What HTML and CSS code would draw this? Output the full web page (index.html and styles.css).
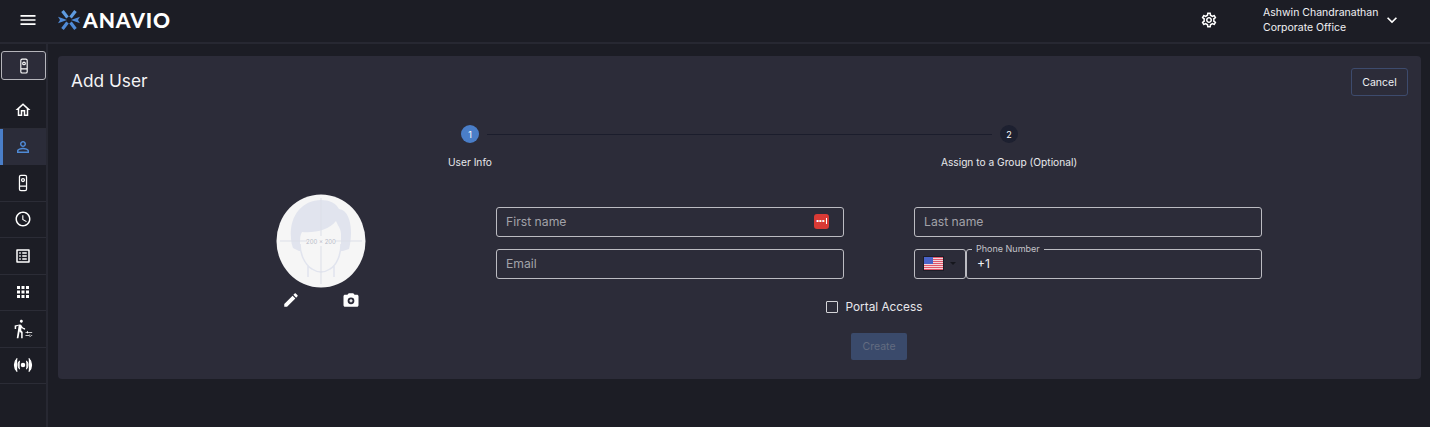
FILE: index.html
```html
<!DOCTYPE html>
<html lang="en">
<head>
<meta charset="utf-8">
<title>Add User</title>
<link rel="stylesheet" href="styles.css">
</head>
<body>
<div class="app">
  <header class="topbar">
    <button class="menu-btn" aria-label="menu"><svg class="ico-20" viewBox="0 0 24 24"><path d="M3 18h18v-2H3v2zm0-5h18v-2H3v2zm0-7v2h18V6H3z"/></svg></button>
    <div class="logo">
      <svg class="logo-mark" viewBox="0 0 22 20">
        <g fill="none" stroke-width="3.200" stroke="#4f8ad6">
          <path d="M4.500 1 L9.500 7.500 M17.500 1 L12.500 7.500" stroke="#5f9be0"/>
          <path d="M4.500 19 L9.500 12.500 M17.500 19 L12.500 12.500"/>
        </g>
        <path d="M0 6.800 L9 10 L0 13.200 L2 10 Z M22 6.800 L13 10 L22 13.200 L20 10 Z" fill="#4f8ad6"/>
      </svg>
      <span class="logo-text">ANAVIO</span>
    </div>
    <div class="spacer"></div>
    <button class="gear-btn" aria-label="settings"><svg class="ico-18" viewBox="0 0 24 24"><path d="M19.43 12.98c.04-.32.07-.64.07-.98 0-.34-.03-.66-.07-.98l2.11-1.65c.19-.15.24-.42.12-.64l-2-3.46c-.09-.16-.26-.25-.44-.25-.06 0-.12.01-.17.03l-2.49 1c-.52-.4-1.08-.73-1.69-.98l-.38-2.65C14.46 2.18 14.25 2 14 2h-4c-.25 0-.46.18-.49.42l-.38 2.65c-.61.25-1.17.59-1.69.98l-2.49-1c-.06-.02-.12-.03-.18-.03-.17 0-.34.09-.43.25l-2 3.46c-.13.22-.07.49.12.64l2.11 1.65c-.04.32-.07.65-.07.98 0 .33.03.66.07.98l-2.11 1.65c-.19.15-.24.42-.12.64l2 3.46c.09.16.26.25.44.25.06 0 .12-.01.17-.03l2.49-1c.52.4 1.08.73 1.69.98l.38 2.65c.03.24.24.42.49.42h4c.25 0 .46-.18.49-.42l.38-2.65c.61-.25 1.17-.59 1.69-.98l2.49 1c.06.02.12.03.18.03.17 0 .34-.09.43-.25l2-3.46c.12-.22.07-.49-.12-.64l-2.11-1.65zm-1.98-1.71c.04.31.05.52.05.73 0 .21-.02.43-.05.73l-.14 1.13.89.7 1.08.84-.7 1.21-1.27-.51-1.04-.42-.9.68c-.43.32-.84.56-1.25.73l-1.06.43-.16 1.13-.2 1.35h-1.4l-.19-1.35-.16-1.13-1.06-.43c-.43-.18-.83-.41-1.23-.71l-.91-.7-1.06.43-1.27.51-.7-1.21 1.08-.84.89-.7-.14-1.13c-.03-.31-.05-.54-.05-.74s.02-.43.05-.73l.14-1.13-.89-.7-1.08-.84.7-1.21 1.27.51 1.04.42.9-.68c.43-.32.84-.56 1.25-.73l1.06-.43.16-1.13.2-1.35h1.39l.19 1.35.16 1.13 1.06.43c.43.18.83.41 1.23.71l.91.7 1.06-.43 1.27-.51.7 1.21-1.07.85-.89.7.14 1.13zM12 8c-2.21 0-4 1.79-4 4s1.79 4 4 4 4-1.79 4-4-1.79-4-4-4zm0 6c-1.1 0-2-.9-2-2s.9-2 2-2 2 .9 2 2-.9 2-2 2z"/></svg></button>
    <div class="account">
      <div class="account-text"><div>Ashwin Chandranathan</div><div>Corporate Office</div></div>
      <svg class="ico-20" viewBox="0 0 24 24"><path d="M16.59 8.59L12 13.17 7.41 8.59 6 10l6 6 6-6z"/></svg>
    </div>
  </header>
  <div class="layout">
    <nav class="sidebar">
      <button class="device-btn" aria-label="device">
        <svg class="ico-18" viewBox="0 0 24 24"><path fill-rule="evenodd" d="M9.500 2h5A2.500 2.500 0 0 1 17 4.500v15a2.500 2.500 0 0 1-2.500 2.500h-5A2.500 2.500 0 0 1 7 19.500v-15A2.500 2.500 0 0 1 9.500 2zm0 1.500a1 1 0 0 0-1 1V15h7V4.500a1 1 0 0 0-1-1h-5zm-1 13v3a1 1 0 0 0 1 1h5a1 1 0 0 0 1-1v-3h-7zM12 6a2.500 2.500 0 1 1 0 5 2.500 2.500 0 0 1 0-5zm0 1.500a1 1 0 1 0 0 2 1 1 0 0 0 0-2z"/></svg>
      </button>
      <ul class="nav-list">
        <li class="nav-item"><svg class="ico-18" viewBox="0 0 24 24"><path d="M12 5.69l5 4.5V18h-2v-6H9v6H7v-7.81l5-4.5M12 3L2 12h3v8h6v-6h2v6h6v-8h3L12 3z"/></svg></li>
        <li class="nav-item active"><svg class="ico-18" viewBox="0 0 24 24"><path d="M12 5.9c1.16 0 2.1.94 2.1 2.1s-.94 2.1-2.1 2.1S9.9 9.16 9.9 8s.94-2.1 2.1-2.1m0 9c2.97 0 6.1 1.46 6.1 2.1v1.1H5.9V17c0-.64 3.13-2.1 6.1-2.1M12 4C9.79 4 8 5.79 8 8s1.79 4 4 4 4-1.79 4-4-1.79-4-4-4zm0 9c-2.67 0-8 1.34-8 4v3h16v-3c0-2.66-5.33-4-8-4z"/></svg></li>
        <li class="nav-item"><svg class="ico-20" viewBox="0 0 24 24"><path fill-rule="evenodd" d="M9.500 2h5A2.500 2.500 0 0 1 17 4.500v15a2.500 2.500 0 0 1-2.500 2.500h-5A2.500 2.500 0 0 1 7 19.500v-15A2.500 2.500 0 0 1 9.500 2zm0 1.500a1 1 0 0 0-1 1V15h7V4.500a1 1 0 0 0-1-1h-5zm-1 13v3a1 1 0 0 0 1 1h5a1 1 0 0 0 1-1v-3h-7zM12 6a2.500 2.500 0 1 1 0 5 2.500 2.500 0 0 1 0-5zm0 1.500a1 1 0 1 0 0 2 1 1 0 0 0 0-2z"/></svg></li>
        <li class="nav-item"><svg class="ico-18" viewBox="0 0 24 24"><path d="M11.99 2C6.47 2 2 6.48 2 12s4.47 10 9.99 10C17.52 22 22 17.52 22 12S17.52 2 11.99 2zM12 20c-4.42 0-8-3.58-8-8s3.58-8 8-8 8 3.58 8 8-3.58 8-8 8zm.5-13H11v6l5.25 3.15.75-1.23-4.5-2.67z"/></svg></li>
        <li class="nav-item"><svg class="ico-18" viewBox="0 0 24 24"><path d="M19 5v14H5V5h14m1.100-2H3.900c-.5 0-.9.4-.9.9v16.200c0 .4.4.9.9.9h16.200c.4 0 .9-.5.9-.9V3.900c0-.5-.5-.9-.9-.9zM11 7h6v2h-6V7zm0 4h6v2h-6v-2zm0 4h6v2h-6zM7 7h2v2H7zm0 4h2v2H7zm0 4h2v2H7z"/></svg></li>
        <li class="nav-item"><svg class="ico-18" viewBox="0 0 24 24"><path d="M4 8h4V4H4v4zm6 12h4v-4h-4v4zm-6 0h4v-4H4v4zm0-6h4v-4H4v4zm6 0h4v-4h-4v4zm6-10v4h4V4h-4zm-6 4h4V4h-4v4zm6 6h4v-4h-4v4zm0 6h4v-4h-4v4z"/></svg></li>
        <li class="nav-item"><svg class="ico-20" viewBox="0 0 24 24"><path d="M10 4.500c1 0 1.800-.8 1.800-1.800S11 1 10 1s-1.800.8-1.800 1.700S9 4.500 10 4.500zM6.800 7.700 4.500 23h2l1.500-8 1.800 2v6h1.800v-7.500l-1.800-2 .5-3c1 1.300 2.600 2.200 4.200 2.300v-1.800c-1.500 0-2.800-.9-3.500-2.100l-.9-1.500c-.3-.5-.9-.9-1.500-.9-.3 0-.5.1-.7.1L2 7.700V12h1.800V9l3-1.300z"/><path d="M15 15.500h8v1h-8zM18 14v3.800l-2-1.800zM15 19.500h8v1h-8zM20 18v3.800l2-1.800z"/></svg></li>
        <li class="nav-item"><svg class="ico-20" viewBox="0 0 24 24" fill="none" stroke="#fff" stroke-width="1.400"><circle cx="12" cy="12" r="2"/><path d="M8 7a7.500 7.500 0 0 0 0 10M16 7a7.500 7.500 0 0 1 0 10M5 4a11.500 11.500 0 0 0 0 16M19 4a11.500 11.500 0 0 1 0 16"/></svg></li>
      </ul>
    </nav>
    <main class="content">
      <section class="card">
        <div class="card-head">
          <h1 class="title">Add User</h1>
          <button class="cancel">Cancel</button>
        </div>
        <div class="stepper">
          <div class="step"><span class="dot dot-on">1</span><span class="step-label">User Info</span></div>
          <div class="step-line"></div>
          <div class="step"><span class="dot">2</span><span class="step-label">Assign to a Group (Optional)</span></div>
        </div>
        <div class="form-row">
          <div class="avatar-col">
            <svg class="avatar" viewBox="0 0 90 94">
              <ellipse cx="45" cy="47" rx="44.500" ry="46.500" fill="#f6f6f6"/>
              <path d="M15 44C13 20 28 6 45 6c8 0 15 3 18 9 8 1 12 11 12 24 0 6-1 12-2 16l-6 2H23l-6-3c-1-3-2-6-2-10z" fill="#e1e4ee"/>
              <path d="M24 50c0-5 0-9 2-12 14 1 27-2 34-11 2 5 5 8 5 13v10c0 14-9 27-20 28-12 0-21-13-21-28z" fill="#f6f6f6"/>
              <path d="M24 50c0 10 5 21 12 25 3 2 6 3 9 3s6-1 9-3c7-4 11-15 11-25M32 71v12M58 71v12" fill="none" stroke="#e1e4ee" stroke-width="1.500"/>
              <path d="M45 4v86M4 47h82" stroke="#dcdfe8" stroke-width="1"/>
              <rect x="31" y="42" width="28" height="10" fill="#f6f6f6"/>
              <text x="45" y="49.500" class="avatar-size" text-anchor="middle">200 x 200</text>
            </svg>
            <div class="avatar-actions">
              <svg class="ico-18" viewBox="0 0 24 24"><path d="M3 17.250V21h3.750L17.810 9.940l-3.750-3.750L3 17.250zM20.710 7.040c.39-.39.39-1.020 0-1.410l-2.340-2.340c-.39-.39-1.020-.39-1.410 0l-1.830 1.830 3.750 3.750 1.830-1.830z"/></svg>
              <svg class="ico-18" viewBox="0 0 24 24"><path fill-rule="evenodd" d="M9 3 7.170 5H4c-1.100 0-2 .9-2 2v12c0 1.100.9 2 2 2h16c1.100 0 2-.9 2-2V7c0-1.100-.9-2-2-2h-3.170L15 3H9zm3 5.500a4.500 4.500 0 1 1 0 9 4.500 4.500 0 0 1 0-9zM11 11v1.500H9.500v1H11V15h2v-1.500h1.500v-1H13V11h-2z"/></svg>
            </div>
          </div>
          <div class="fields">
            <div class="field-grid">
              <div class="field">
                <input class="input" placeholder="First name">
                <span class="pass-badge"><span class="pass-dots">•••</span><span class="pass-bar"></span></span>
              </div>
              <div class="field"><input class="input" placeholder="Last name"></div>
              <div class="field"><input class="input" placeholder="Email"></div>
              <div class="phone">
                <div class="flag-box">
                  <svg class="flag" viewBox="0 0 19 13">
                    <rect width="19" height="13" fill="#f5d5da"/>
                    <path d="M0 0h19v1H0zM0 2h19v1H0zM0 4h19v1H0zM0 6h19v1H0zM0 8h19v1H0zM0 10h19v1H0zM0 12h19v1H0z" fill="#e0566a"/>
                    <rect width="9" height="7" fill="#4a63c8"/>
                  </svg>
                  <span class="caret"></span>
                </div>
                <div class="phone-field">
                  <span class="phone-label">Phone Number</span>
                  <input class="input input-phone" value="+1">
                </div>
              </div>
            </div>
            <label class="portal"><span class="checkbox"></span><span>Portal Access</span></label>
            <button class="create">Create</button>
          </div>
        </div>
      </section>
    </main>
  </div>
</div>
</body>
</html>
```
FILE: styles.css
```css
* { box-sizing: border-box; }
html, body { margin: 0; height: 100%; }
body {
  background: #1c1d25;
  color: #fff;
  font-family: Inter, "Liberation Sans", sans-serif;
  overflow: hidden;
}
button { font-family: inherit; }
svg { fill: #fff; display: block; }
.ico-18 { width: 18px; height: 18px; }
.ico-20 { width: 20px; height: 20px; }

.app { height: 427px; display: flex; flex-direction: column; }

.topbar {
  height: 44px;
  display: flex;
  align-items: center;
  padding-bottom: 3px;
  border-bottom: 2px solid #272832;
  flex: none;
}
.menu-btn {
  width: 20px; height: 20px; padding: 0; margin-left: 18px;
  background: none; border: 0;
}
.logo { display: flex; align-items: center; margin-left: 20px; gap: 3px; }
.logo-mark { width: 22px; height: 20px; }
.logo-text {
  font-family: Lato, sans-serif;
  font-weight: 900;
  font-size: 21px;
  letter-spacing: 0.900px;
  line-height: 1;
}
.spacer { flex: 1; }
.gear-btn {
  width: 18px; height: 18px; padding: 0;
  background: none; border: 0;
  margin-right: 45px;
}
.account {
  display: flex; align-items: center;
  font-size: 10.500px; line-height: 15px;
  color: #f0f0f3;
  margin-right: 28px;
  white-space: nowrap;
}
.account-text { width: 119px; padding-top: 1px; }

.layout { flex: 1; display: flex; min-height: 0; }
.sidebar {
  width: 48px;
  flex: none;
  border-right: 2px solid #272832;
  padding-top: 7px;
}
.device-btn {
  display: flex; align-items: center; justify-content: center;
  width: 45px; height: 29px; margin-left: 1px;
  background: #2c2c39;
  border: 1px solid #b5b5bb;
  border-radius: 3px;
  padding: 0;
}
.nav-list { list-style: none; margin: 12px 0 0; padding: 0; }
.nav-item {
  height: 36.500px;
  display: flex; align-items: center; justify-content: center;
  border-bottom: 1px solid #2b2c36;
}
.nav-item.active {
  background: #2b2c39;
  border-left: 3px solid #4a7ec8;
  border-bottom: 0;
  padding-right: 3px;
}
.nav-item.active svg { fill: #4f8ad6; }

.content { flex: 1; padding: 12px 9px 0 10px; min-width: 0; }
.card {
  height: 323px;
  background: #2c2c39;
  border-radius: 4px;
  position: relative;
}
.card-head {
  display: flex; justify-content: space-between; align-items: flex-start;
  padding: 12px 13px 0 13px;
}
.title {
  margin: 0;
  font-size: 17.300px;
  font-weight: 400;
  line-height: 26px;
  color: #f4f4f6;
}
.cancel {
  width: 57px; height: 28px;
  background: none;
  border: 1px solid #3d4b6d;
  border-radius: 3px;
  color: #f0f0f3;
  font-size: 10.500px;
  padding: 0;
}
.stepper {
  display: flex;
  width: 557px;
  margin: 29px 0 0 403px;
  height: 55px;
}
.step {
  width: 18px;
  flex: none;
  display: flex; flex-direction: column; align-items: center;
}
.dot {
  width: 18px; height: 18px; border-radius: 50%;
  background: #1d2030;
  color: #fff;
  font-size: 9px;
  display: flex; align-items: center; justify-content: center;
  flex: none;
}
.dot-on { background: #4a7ec8; }
.step-label {
  margin-top: 13px;
  font-size: 10.200px;
  line-height: 13px;
  white-space: nowrap;
  color: #e8e8ec;
}
.step-line {
  flex: 1;
  height: 1px;
  margin: 9px 8px 0;
  background: #1b1d2c;
}

.form-row { display: flex; margin-top: 14px; }
.avatar-col { width: 90px; margin-left: 218px; flex: none; }
.avatar { width: 90px; height: 94px; }
.avatar-size { font-size: 6px; fill: #b9bcc8; font-family: Inter, sans-serif; }
.avatar-actions {
  display: flex; justify-content: space-between;
  padding: 3px 0 0 6px;
}
.avatar-actions svg:last-child { margin-right: 6px; }

.fields { margin-left: 130px; width: 766px; padding-top: 12.500px; display: flex; flex-direction: column; align-items: center; }
.field-grid {
  display: grid;
  grid-template-columns: 348px 348px;
  column-gap: 70px;
  row-gap: 12px;
  width: 100%;
}
.field { position: relative; height: 30px; }
.input {
  width: 100%;
  height: 100%;
  display: block;
  background: none;
  border: 1px solid #bcbcc2;
  border-radius: 3px;
  color: #f0f0f3;
  font-family: inherit;
  font-size: 12.200px;
  padding: 0 9px;
  outline: 0;
}
.input::placeholder { color: #a2a2a9; opacity: 1; }
.pass-badge {
  position: absolute;
  right: 15px; top: 7px;
  width: 15px; height: 15px;
  background: #d93a35;
  border-radius: 3px;
  display: flex; align-items: center; justify-content: center;
  color: #fff;
  font-size: 8px;
  line-height: 1;
  font-family: "Liberation Sans", sans-serif;
}
.pass-bar { width: 1px; height: 6px; background: #fff; margin-left: 1px; }
.phone { display: flex; height: 30px; }
.flag-box {
  width: 52px;
  border: 1px solid #bcbcc2;
  border-radius: 3px;
  display: flex; align-items: center;
  padding-left: 9px;
  flex: none;
}
.flag { width: 19px; height: 13px; outline: 1px solid #1d1d28; }
.caret {
  margin-left: 7px;
  border-left: 3px solid transparent;
  border-right: 3px solid transparent;
  border-top: 3px solid #15161d;
}
.phone-field { position: relative; flex: 1; }
.input-phone { padding-left: 10px; }
.phone-label {
  position: absolute;
  top: -5px; left: 6px;
  padding: 0 4px;
  background: #2c2c39;
  color: #c4c4ca;
  font-size: 9px;
  line-height: 10px;
}
.portal {
  display: flex; align-items: center;
  gap: 8px;
  margin: 21px 10px 0 0;
  font-size: 11.800px;
  line-height: 15px;
  color: #e8e8ec;
}
.checkbox {
  width: 12px; height: 12px;
  border: 1.500px solid #d4d4d8;
  border-radius: 1px;
}
.create {
  width: 56px; height: 27px;
  margin-top: 18px;
  background: #3a4a6b;
  color: #636c80;
  border: 0;
  border-radius: 2px;
  font-size: 10.500px;
  padding: 0;
}
```
